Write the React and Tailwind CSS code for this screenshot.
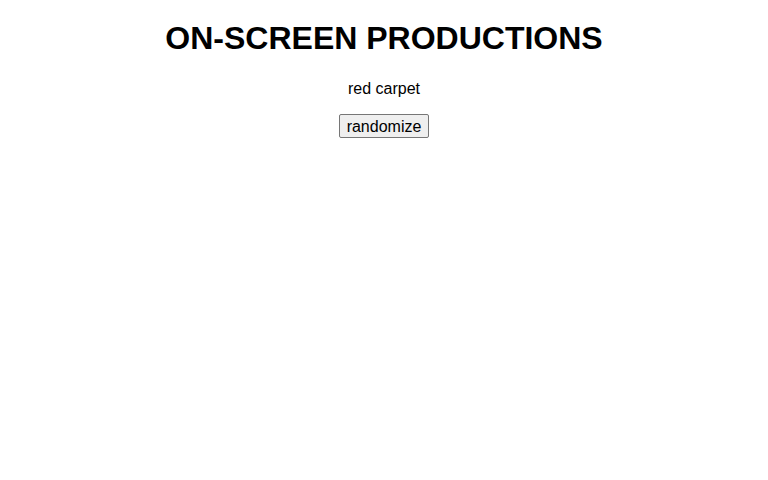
import React, { useState } from 'react';

const themes = ['red carpet', 'premiere night', 'behind the scenes', 'director\'s cut', 'final take'];

const App = () => {
  const [theme, setTheme] = useState(themes[0]);

  const randomize = () => {
    setTheme(themes[Math.floor(Math.random() * themes.length)]);
  };

  return (
    <div className="min-h-screen bg-white text-black text-center font-['Liberation_Sans',Arial,sans-serif]">
      <h1 className="pt-[20px] text-[32px] font-bold leading-[37px]">ON-SCREEN PRODUCTIONS</h1>
      <p className="mt-[23px] text-base leading-[18px]">{theme}</p>
      <button
        onClick={randomize}
        className="mt-[16px] h-[24px] px-[7px] text-base leading-[19px] bg-[#efefef] border border-[#767676] rounded-[2px] hover:bg-[#e5e5e5]"
      >
        randomize
      </button>
    </div>
  );
};

export default App;
